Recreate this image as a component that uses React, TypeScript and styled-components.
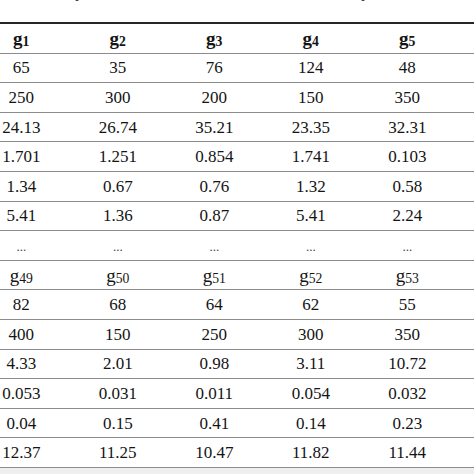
import styled, { createGlobalStyle } from "styled-components";

const GlobalStyle = createGlobalStyle`
  html, body {
    margin: 0;
    padding: 0;
    background: #ffffff;
  }
  body {
    overflow: hidden;
  }
`;

const Page = styled.div`
  width: 474px;
  height: 474px;
  overflow: hidden;
  display: flex;
  flex-direction: column;
  background: #ffffff;
  font-family: "Liberation Serif", "DejaVu Serif", serif;
  color: #141414;
`;

const CaptionBox = styled.div`
  height: 22px;
  flex-shrink: 0;
  overflow: hidden;
`;

const Caption = styled.p`
  margin: -20px 0 0 -47px;
  font-size: 17px;
  line-height: 24px;
  word-spacing: 3px;
  white-space: nowrap;
`;

const TopRule = styled.div`
  height: 2px;
  flex-shrink: 0;
  background: #262626;
`;

const Row = styled.div<{ $head?: boolean }>`
  display: grid;
  grid-template-columns: repeat(5, 96.5px) 1fr;
  margin-left: -27px;
  width: calc(100% + 27px);
  height: 29.6px;
  box-sizing: border-box;
  flex-shrink: 0;
  align-items: center;
  border-bottom: 1px solid #8c8c8c;
  font-size: 17px;
  font-weight: ${({ $head }) => ($head ? 700 : 400)};
`;

const Cell = styled.span<{ $dots?: boolean }>`
  text-align: center;
  line-height: 1;
  color: ${({ $dots }) => ($dots ? "#444" : "inherit")};
  font-size: ${({ $dots }) => ($dots ? "13px" : "inherit")};
  padding-top: ${({ $dots }) => ($dots ? "2px" : "0")};
`;

const Gene = styled.span`
  font-size: 19px;
`;

const Sub = styled.sub`
  font-size: 0.72em;
  vertical-align: -0.1em;
  line-height: 0;
  font-weight: inherit;
`;

const Bottom = styled.div`
  flex: 1;
  background: #efefef;
`;

type Line = { head?: boolean; dots?: boolean; gene?: number[]; values?: string[] };

const lines: Line[] = [
  { head: true, gene: [1, 2, 3, 4, 5] },
  { values: ["65", "35", "76", "124", "48"] },
  { values: ["250", "300", "200", "150", "350"] },
  { values: ["24.13", "26.74", "35.21", "23.35", "32.31"] },
  { values: ["1.701", "1.251", "0.854", "1.741", "0.103"] },
  { values: ["1.34", "0.67", "0.76", "1.32", "0.58"] },
  { values: ["5.41", "1.36", "0.87", "5.41", "2.24"] },
  { dots: true, values: ["...", "...", "...", "...", "..."] },
  { gene: [49, 50, 51, 52, 53] },
  { values: ["82", "68", "64", "62", "55"] },
  { values: ["400", "150", "250", "300", "350"] },
  { values: ["4.33", "2.01", "0.98", "3.11", "10.72"] },
  { values: ["0.053", "0.031", "0.011", "0.054", "0.032"] },
  { values: ["0.04", "0.15", "0.41", "0.14", "0.23"] },
  { values: ["12.37", "11.25", "10.47", "11.82", "11.44"] },
];

export default function App() {
  return (
    <Page>
      <GlobalStyle />
      <CaptionBox>
        <Caption>Table 2. Summary of the characteristics of the full family.</Caption>
      </CaptionBox>
      <TopRule />
      {lines.map((line, i) => (
        <Row key={i} $head={line.head}>
          {line.gene
            ? line.gene.map((n) => (
                <Cell key={n}>
                  <Gene>
                    g<Sub>{n}</Sub>
                  </Gene>
                </Cell>
              ))
            : line.values!.map((v, j) => (
                <Cell key={j} $dots={line.dots}>
                  {v}
                </Cell>
              ))}
          <Cell />
        </Row>
      ))}
      <Bottom />
    </Page>
  );
}
